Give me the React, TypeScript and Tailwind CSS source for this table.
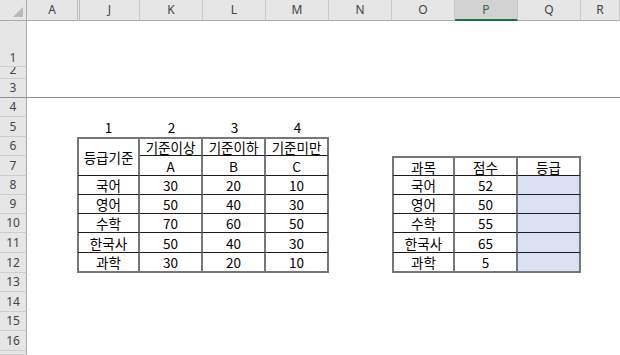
import React from "react";

type Cell = { text?: string; cls?: string };

const font = { fontFamily: '"Noto Sans CJK KR", "Noto Sans", sans-serif' };

// border pieces for the bordered tables
const T = "border-t-2 border-t-[#777777]";
const L = "border-l-2 border-l-[#777777]";
const V = "border-r-2 border-r-[#777777]";
const H = "border-b border-b-[#1c1c1c]";
const B = "border-b-2 border-b-[#777777]";
const FILL = "bg-[#d9e1f2]";

const letters = ["A", "J", "K", "L", "M", "N", "O", "P", "Q", "R"];

const table1: Record<number, string[]> = {
  8: ["국어", "30", "20", "10"],
  9: ["영어", "50", "40", "30"],
  10: ["수학", "70", "60", "50"],
  11: ["한국사", "50", "40", "30"],
  12: ["과학", "30", "20", "10"],
};

const table2: Record<number, string[]> = {
  7: ["과목", "점수", "등급"],
  8: ["국어", "52", ""],
  9: ["영어", "50", ""],
  10: ["수학", "55", ""],
  11: ["한국사", "65", ""],
  12: ["과학", "5", ""],
};

const rowCells = (r: number): Cell[] => {
  const cells: Cell[] = [{}]; // column A
  // J..M
  if (r === 5) {
    cells.push({ text: "1" }, { text: "2" }, { text: "3" }, { text: "4" });
  } else if (r === 6) {
    cells.push(
      { text: "등급기준", cls: `row-span-2 ${T} ${L} ${V} ${H}` },
      { text: "기준이상", cls: `${T} ${V} ${H}` },
      { text: "기준이하", cls: `${T} ${V} ${H}` },
      { text: "기준미만", cls: `${T} ${V} ${H}` }
    );
  } else if (r === 7) {
    // J7 is taken by the merged cell above
    cells.push(
      { text: "A", cls: `${V} ${H}` },
      { text: "B", cls: `${V} ${H}` },
      { text: "C", cls: `${V} ${H}` }
    );
  } else if (table1[r]) {
    const bottom = r === 12 ? B : H;
    table1[r].forEach((t, i) =>
      cells.push({ text: t, cls: `${i === 0 ? L : ""} ${V} ${bottom}` })
    );
  } else {
    cells.push({}, {}, {}, {});
  }
  // N
  cells.push({});
  // O..Q
  if (table2[r]) {
    const top = r === 7 ? T : "";
    const bottom = r === 12 ? B : H;
    table2[r].forEach((t, i) =>
      cells.push({
        text: t,
        cls: `${top} ${i === 0 ? L : ""} ${V} ${bottom} ${i === 2 && r > 7 ? FILL : ""}`,
      })
    );
  } else {
    cells.push({}, {}, {});
  }
  // R
  cells.push({});
  return cells;
};

const rows = Array.from({ length: 17 }, (_, i) => i + 1);

const Corner = () => (
  <div className="relative bg-[#e6e6e6] border-r border-b border-[#ababab]">
    <svg className="absolute right-[3px] bottom-[3px]" width="10" height="10" viewBox="0 0 10 10">
      <path d="M10 0 L10 10 L0 10 Z" fill="#b9b9b9" />
    </svg>
  </div>
);

const App = () => {
  return (
    <div className="w-[620px] h-[355px] overflow-hidden bg-white text-black" style={font}>
      <div className="grid h-full grid-cols-[27px_50px_63px_63px_63px_63px_63px_63px_63px_63px_1fr] grid-rows-[21px_46px_12px_19px_19px_20px_19px_20px_19px_19px_19px_20px_20px_19px_20px_19px_20px_minmax(0,1fr)]">
        {/* column headers */}
        <Corner />
        {letters.map((l) => (
          <div
            key={l}
            className={`flex items-center justify-center text-[12px] border-b ${
              l === "P"
                ? "bg-[#d2d2d2] text-[#2f6b45] border-b-2 border-b-[#217346]"
                : "bg-[#e6e6e6] text-[#444] border-b-[#ababab]"
            } ${l === "A" ? "" : "border-r border-r-[#c8c8c8]"} ${
              l === "J" ? "border-l-[3px] border-double border-l-[#bdbdbd]" : ""
            }`}
            style={{ fontFamily: '"Noto Sans", sans-serif' }}
          >
            {l}
          </div>
        ))}

        {rows.map((r) => (
          <React.Fragment key={r}>
            <div
              className={`flex justify-center overflow-hidden bg-[#e6e6e6] text-[12px] leading-[14px] text-[#444] border-r border-r-[#ababab] border-b ${
                r === 3 ? "border-b-[#8f8f8f]" : "border-b-[#cdcdcd]"
              } ${r <= 2 ? "items-end pb-[1px]" : "items-center"}`}
              style={{ fontFamily: '"Noto Sans", sans-serif' }}
            >
              {r < 17 ? r : ""}
            </div>
            {rowCells(r).map((c, i) => (
              <div
                key={i}
                className={`flex items-center justify-center text-[13.5px] leading-[16px] whitespace-nowrap ${
                  r === 3 ? "border-b border-b-[#8f8f8f]" : ""
                } ${c.cls ?? ""}`}
              >
                {c.text}
              </div>
            ))}
          </React.Fragment>
        ))}
      </div>
    </div>
  );
};

export default App;
